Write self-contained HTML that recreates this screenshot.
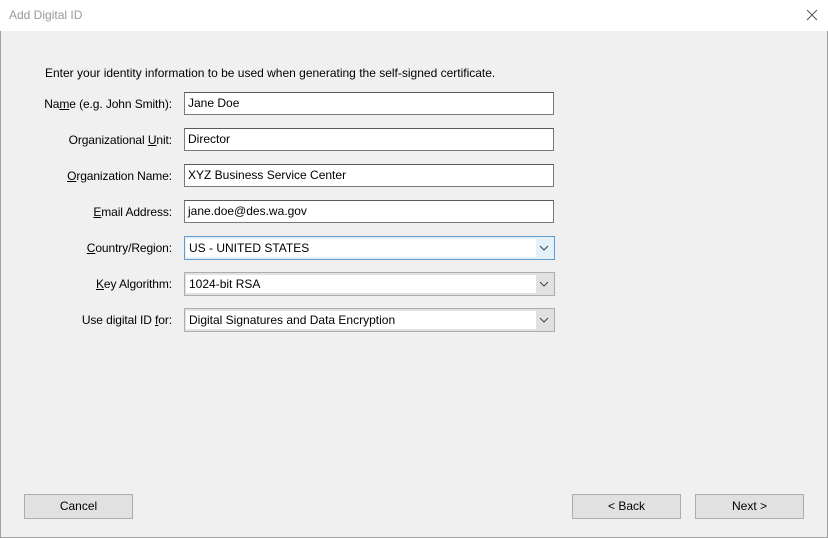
<!DOCTYPE html>
<html><head><style>
*{margin:0;padding:0;box-sizing:border-box}
body{width:828px;height:538px;background:#f0f0f0;font-family:"Liberation Sans",sans-serif;font-size:12px;color:#000;position:relative;overflow:hidden}
.win{position:absolute;left:0;top:0;width:828px;height:538px;border:1px solid #a0a0a0}
.title{position:absolute;left:0;top:0;width:828px;height:31px;background:#fff}
.title span{position:absolute;left:9px;top:8px;color:#999;font-size:12px}
.x{position:absolute;left:806px;top:9px}
.l{position:absolute;right:656px;text-align:right;white-space:nowrap;letter-spacing:-0.1px}
.in{position:absolute;left:184px;width:370px;height:23px;background:#fff;border:1px solid #7a7a7a;border-top-color:#5a5a5a;padding:3px 3px;}
.cb{position:absolute;left:184px;width:371px;height:24px;background:#e1e1e1;border:1px solid #adadad}
.cb .w{position:absolute;left:1px;top:2px;width:350px;height:18px;background:#fff;padding:2px 3px}
.cb.f{border-color:#5f9ad3;background:#e5f1fb}
.cb svg{position:absolute;right:5px;top:8px}
.b{position:absolute;top:494px;width:109px;height:25px;background:#e1e1e1;border:1px solid #adadad;text-align:center;line-height:23px}
</style></head><body>
<div class="win"></div>
<div class="title"><span>Add Digital ID</span><svg class="x" width="12" height="12"><path d="M1 1L11 11M11 1L1 11" stroke="#555" stroke-width="1"/></svg></div>
<div style="position:absolute;left:45px;top:66px">Enter your identity information to be used when generating the self-signed certificate.</div>
<div class="l" style="top:97px">Na<u>m</u>e (e.g. John Smith):</div>
<div class="in" style="top:92px">Jane Doe</div>
<div class="l" style="top:133px">Organizational <u>U</u>nit:</div>
<div class="in" style="top:128px">Director</div>
<div class="l" style="top:169px"><u>O</u>rganization Name:</div>
<div class="in" style="top:164px">XYZ Business Service Center</div>
<div class="l" style="top:205px"><u>E</u>mail Address:</div>
<div class="in" style="top:200px">jane.doe@des.wa.gov</div>
<div class="l" style="top:241px"><u>C</u>ountry/Region:</div>
<div class="cb f" style="top:236px"><div class="w">US - UNITED STATES</div><svg width="10" height="6"><path d="M1 1L5 5L9 1" fill="none" stroke="#444"/></svg></div>
<div class="l" style="top:277px"><u>K</u>ey Algorithm:</div>
<div class="cb" style="top:272px"><div class="w">1024-bit RSA</div><svg width="10" height="6"><path d="M1 1L5 5L9 1" fill="none" stroke="#444"/></svg></div>
<div class="l" style="top:313px">Use digital ID <u>f</u>or:</div>
<div class="cb" style="top:308px"><div class="w">Digital Signatures and Data Encryption</div><svg width="10" height="6"><path d="M1 1L5 5L9 1" fill="none" stroke="#444"/></svg></div>
<div class="b" style="left:24px">Cancel</div>
<div class="b" style="left:572px">&lt; Back</div>
<div class="b" style="left:695px">Next &gt;</div>
</body></html>
